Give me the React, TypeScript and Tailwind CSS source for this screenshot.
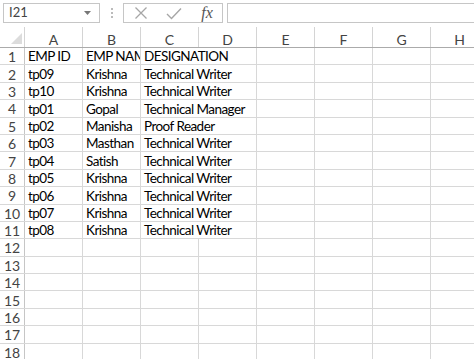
import React from "react";

const cols = ["A", "B", "C", "D", "E", "F", "G", "H"];

const data: [string, string, string][] = [
  ["EMP ID", "EMP NAME", "DESIGNATION"],
  ["tp09", "Krishna", "Technical Writer"],
  ["tp10", "Krishna", "Technical Writer"],
  ["tp01", "Gopal", "Technical Manager"],
  ["tp02", "Manisha", "Proof Reader"],
  ["tp03", "Masthan", "Technical Writer"],
  ["tp04", "Satish", "Technical Writer"],
  ["tp05", "Krishna", "Technical Writer"],
  ["tp06", "Krishna", "Technical Writer"],
  ["tp07", "Krishna", "Technical Writer"],
  ["tp08", "Krishna", "Technical Writer"],
];

const font = { fontFamily: "Lato, 'Open Sans', sans-serif" };

function FormulaBar() {
  return (
    <div className="flex items-start h-[27px] pt-[3px] bg-white">
      <div className="ml-[3px] w-[97px] h-[20px] border border-[#c6c6c6] flex items-center justify-between pl-[5px] pr-[8px]">
        <span className="text-[13px] text-[#444]">I21</span>
        <svg width="7" height="4" viewBox="0 0 7 4">
          <path d="M0 0h7L3.5 4z" fill="#777" />
        </svg>
      </div>
      <div className="w-[23px] h-[20px] flex flex-col items-center justify-center gap-[2px]">
        <span className="w-[2px] h-[2px] bg-[#bbb]" />
        <span className="w-[2px] h-[2px] bg-[#bbb]" />
        <span className="w-[2px] h-[2px] bg-[#bbb]" />
      </div>
      <div className="w-[100px] h-[20px] border border-[#c6c6c6] flex items-center">
        <div className="w-[30px] flex justify-center ml-[2px]">
          <svg width="14" height="14" viewBox="0 0 14 14">
            <path d="M1.5 1.5l11 11M12.5 1.5l-11 11" stroke="#a6a6a6" strokeWidth="1.3" />
          </svg>
        </div>
        <div className="w-[36px] flex justify-center">
          <svg width="16" height="13" viewBox="0 0 16 13">
            <path d="M1 7l4.5 4.5L15 1.5" stroke="#a6a6a6" strokeWidth="1.4" fill="none" />
          </svg>
        </div>
        <div className="w-[30px] flex justify-center">
          <span
            className="text-[16px] italic text-[#555] leading-none"
            style={{ fontFamily: "'Liberation Serif', serif" }}
          >
            fx
          </span>
        </div>
      </div>
      <div className="ml-[4px] flex-1 h-[20px] border border-[#c6c6c6] border-r-0" />
    </div>
  );
}

export default function App() {
  const rowCount = 18;
  return (
    <div className="w-[474px] h-[359px] overflow-hidden bg-white" style={font}>
      <FormulaBar />
      {/* column headers */}
      <div className="flex h-[21px] border-b border-[#ababab]">
        <div className="w-[25px] shrink-0 border-r border-[#d4d4d4] relative">
          <svg className="absolute right-[2px] bottom-[3px]" width="11" height="11" viewBox="0 0 11 11">
            <path d="M11 0v11H0z" fill="#dcdcdc" />
          </svg>
        </div>
        {cols.map((c) => (
          <div
            key={c}
            className="w-[58px] shrink-0 border-r border-[#d4d4d4] flex items-center justify-center pt-[4px] text-[14px] text-[#444]"
          >
            {c}
          </div>
        ))}
      </div>
      {/* rows */}
      {Array.from({ length: rowCount }, (_, r) => {
        const row = data[r];
        return (
          <div key={r} className="flex h-[17.4px] border-b border-[#d8d8d8] text-[13.5px] leading-none">
            <div className="w-[25px] shrink-0 border-r border-[#c6c6c6] flex items-center justify-center pt-[2px] text-[#444] text-[14px]">
              {r + 1}
            </div>
            {cols.map((c, ci) => {
              const val = row && ci < 3 ? row[ci] : "";
              const hideBorder = ci === 2 && !!row;
              return (
                <div
                  key={c}
                  className={
                    "w-[58px] shrink-0 flex items-center pl-[3px] pt-[2px] text-black whitespace-nowrap tracking-[-0.55px] " +
                    (hideBorder ? "" : "border-r border-[#d8d8d8] ") +
                    (ci === 1 ? "overflow-hidden" : "overflow-visible")
                  }
                >
                  {val}
                </div>
              );
            })}
          </div>
        );
      })}
    </div>
  );
}
